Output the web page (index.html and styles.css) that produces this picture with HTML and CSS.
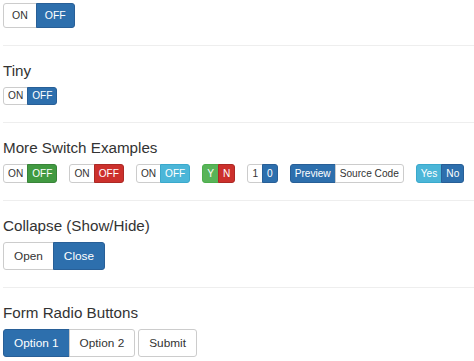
FILE: index.html
```html
<!DOCTYPE html>
<html lang="en">
<head>
    <meta charset="UTF-8">
    <title>Button Switches</title>
    <link rel="stylesheet" href="styles.css">
</head>
<body>
    <div class="btn-group size-sm">
        <button class="btn">ON</button>
        <button class="btn btn-primary">OFF</button>
    </div>
    <hr>

    <h4>Tiny</h4>
    <div class="btn-group size-xs">
        <button class="btn">ON</button>
        <button class="btn btn-primary">OFF</button>
    </div>
    <hr>

    <h4>More Switch Examples</h4>
    <div class="switch-row">
        <div class="btn-group size-xs">
            <button class="btn">ON</button>
            <button class="btn btn-success">OFF</button>
        </div>
        <div class="btn-group size-xs">
            <button class="btn">ON</button>
            <button class="btn btn-danger">OFF</button>
        </div>
        <div class="btn-group size-xs">
            <button class="btn">ON</button>
            <button class="btn btn-info">OFF</button>
        </div>
        <div class="btn-group size-xs">
            <button class="btn btn-success-light">Y</button>
            <button class="btn btn-danger">N</button>
        </div>
        <div class="btn-group size-xs">
            <button class="btn">1</button>
            <button class="btn btn-primary">0</button>
        </div>
        <div class="btn-group size-xs">
            <button class="btn btn-primary">Preview</button>
            <button class="btn">Source Code</button>
        </div>
        <div class="btn-group size-xs">
            <button class="btn btn-info">Yes</button>
            <button class="btn btn-primary">No</button>
        </div>
    </div>
    <hr>

    <h4>Collapse (Show/Hide)</h4>
    <div class="btn-group">
        <button class="btn">Open</button>
        <button class="btn btn-primary">Close</button>
    </div>
    <hr>

    <h4>Form Radio Buttons</h4>
    <form class="radio-form" onsubmit="event.preventDefault();">
        <div class="btn-group">
            <button type="button" class="btn btn-primary">Option 1</button>
            <button type="button" class="btn">Option 2</button>
        </div>
        <button type="submit" class="btn single">Submit</button>
    </form>
</body>
</html>
```

FILE: styles.css
```css
body {
    margin: 0; padding: 3px 0 0 3px; background: #fff; color: #333;
    font-family: "Liberation Sans", Arial, Helvetica, sans-serif; font-size: 11.8px;
}
h4 {
    margin: 16px 0 8px; font-size: 15.2px; line-height: 17px; font-weight: normal; color: #333;
}
hr { margin: 17px 0 0; border: 0; border-top: 1px solid #eee; }

.btn-group { display: inline-flex; vertical-align: top; }
.btn {
    font-family: inherit; font-size: 11.8px; color: #333; background: #fff;
    border: 1px solid #ccc; margin: 0; padding: 0 10px; height: 28px; line-height: 26px;
    cursor: pointer; white-space: nowrap;
}
.btn-group .btn + .btn { margin-left: -1px; }
.btn-group .btn:first-child { border-radius: 3px 0 0 3px; }
.btn-group .btn:last-child { border-radius: 0 3px 3px 0; }
.btn.single { border-radius: 3px; }

.size-sm .btn { font-size: 10.5px; height: 25px; line-height: 23px; padding: 0 8px; }
.size-xs .btn { font-size: 10.15px; height: 18px; line-height: 16px; padding: 0 4px; }
.switch-row .size-xs .btn { height: 19px; line-height: 17px; }

.btn-primary { background: #2d6fad; border-color: #285f97; color: #fff; }
.btn-success { background: #419a41; border-color: #398439; color: #fff; }
.btn-success-light { background: #58b458; border-color: #4cae4c; color: #fff; }
.btn-danger { background: #cc302c; border-color: #ac2925; color: #fff; }
.btn-info { background: #4bb6d8; border-color: #3aa9cc; color: #fff; }

.switch-row { display: flex; gap: 12px; }
.radio-form { display: flex; gap: 3px; margin: 0; }
```
